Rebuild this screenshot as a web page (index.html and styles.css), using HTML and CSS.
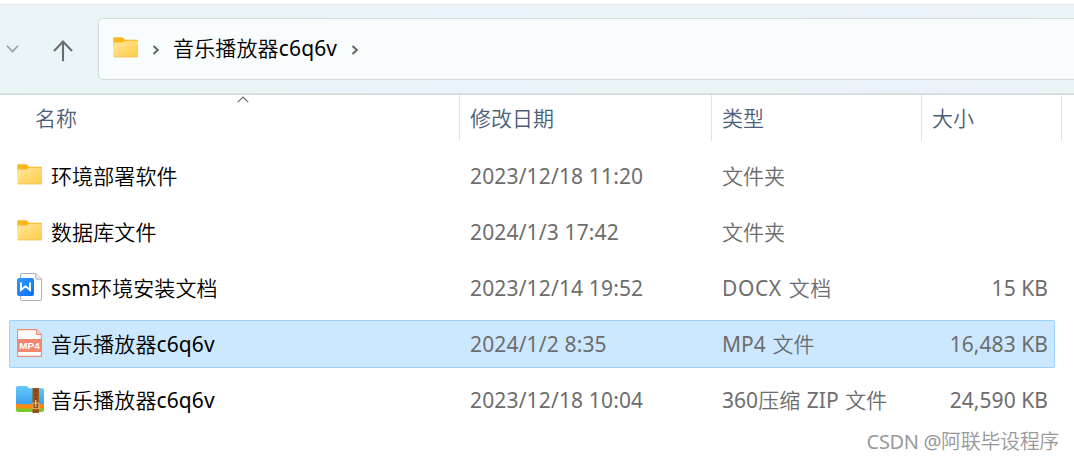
FILE: index.html
```
<!DOCTYPE html>
<html lang="zh-CN">
<head>
    <meta charset="UTF-8">
    <meta name="viewport" content="width=device-width, initial-scale=1.0">
    <title>音乐播放器c6q6v</title>
    <link rel="stylesheet" href="styles.css">
</head>
<body>
    <!-- Shared folder icon -->
    <svg class="defs" width="0" height="0">
        <defs>
            <linearGradient id="folderFill" x1="0" y1="0" x2="1" y2="1">
                <stop offset="0" stop-color="#ffe8a0"/>
                <stop offset="1" stop-color="#fdcb42"/>
            </linearGradient>
            <symbol id="folder" viewBox="0 0 26 22">
                <path d="M0.3 1.5Q0.3 0.3 1.5 0.3H9Q9.8 0.3 10.4 1L12 2.8H24Q25 2.8 25 4V10H0.3Z" fill="#f9b61e"/>
                <path d="M0.3 5.5H9.3Q10.3 5.5 11 4.8L11.6 4.2Q12 3.8 12.8 3.8H25V19Q25 20.3 23.8 20.3H1.5Q0.3 20.3 0.3 19Z" fill="url(#folderFill)"/>
                <path d="M1 19.8H24.5" stroke="#f1c45c" stroke-width="0.9"/>
            </symbol>
        </defs>
    </svg>

    <div class="explorer">
        <div class="toolbar">
            <svg class="recent" width="14" height="10" viewBox="0 0 14 10">
                <path d="M1 1.8L6.5 7.5L12 1.8" fill="none" stroke="#999d9e" stroke-width="1.6"/>
            </svg>
            <svg class="up" width="22" height="24" viewBox="0 0 22 24">
                <path d="M11 22.3V3M2 12L11 2.5L20 12" fill="none" stroke="#6b6e6e" stroke-width="2.1"/>
            </svg>
            <div class="address">
                <svg class="address-icon" width="26" height="22"><use href="#folder"/></svg>
                <svg class="chevron" width="8" height="12" viewBox="0 0 8 12">
                    <path d="M1.5 2L5.8 6L1.5 10" fill="none" stroke="#666" stroke-width="2"/>
                </svg>
                <span class="crumb">音乐播放器c6q6v</span>
                <svg class="chevron" width="8" height="12" viewBox="0 0 8 12">
                    <path d="M1.5 2L5.8 6L1.5 10" fill="none" stroke="#666" stroke-width="2"/>
                </svg>
            </div>
        </div>

        <div class="columns">
            <div class="column column-name">
                名称
                <svg class="sort" width="12" height="7" viewBox="0 0 12 7">
                    <path d="M0.8 6.2L6 1L11.2 6.2" fill="none" stroke="#666" stroke-width="1.1"/>
                </svg>
            </div>
            <div class="column">修改日期</div>
            <div class="column">类型</div>
            <div class="column">大小</div>
        </div>

        <div class="files">
            <div class="file">
                <svg class="icon icon-folder" width="26" height="22"><use href="#folder"/></svg>
                <div class="name">环境部署软件</div>
                <div class="date">2023/12/18 11:20</div>
                <div class="type">文件夹</div>
                <div class="size"></div>
            </div>
            <div class="file">
                <svg class="icon icon-folder" width="26" height="22"><use href="#folder"/></svg>
                <div class="name">数据库文件</div>
                <div class="date">2024/1/3 17:42</div>
                <div class="type">文件夹</div>
                <div class="size"></div>
            </div>
            <div class="file">
                <svg class="icon icon-doc" width="28" height="28" viewBox="0 0 28 28">
                    <defs>
                        <linearGradient id="docFill" x1="0" y1="0" x2="1" y2="1">
                            <stop offset="0" stop-color="#2f9bff"/>
                            <stop offset="1" stop-color="#0d6ff2"/>
                        </linearGradient>
                    </defs>
                    <path d="M6 0.5H20L25.5 6V26Q25.5 27.5 24 27.5H6Q4.5 27.5 4.5 26V2Q4.5 0.5 6 0.5Z" fill="#fff" stroke="#a9aeb9"/>
                    <path d="M19.8 0.8V5Q19.8 6.2 21 6.2H25.3" fill="#eef0f3" stroke="#a9aeb9"/>
                    <rect x="1" y="5" width="17" height="18" rx="2" fill="url(#docFill)"/>
                    <path d="M5 9.5V17L9.5 13.2L14 17V9.5" fill="none" stroke="#fff" stroke-width="1.9"/>
                </svg>
                <div class="name">ssm环境安装文档</div>
                <div class="date">2023/12/14 19:52</div>
                <div class="type type-docx">DOCX 文档</div>
                <div class="size">15 KB</div>
            </div>
            <div class="file selected">
                <svg class="icon icon-doc" width="28" height="28" viewBox="0 0 28 28">
                    <path d="M2 0.6H20.5L25.4 5.5V27.4H1.6V1Z" fill="#fff" stroke="#ef8b75" stroke-width="1.1"/>
                    <path d="M20.5 0.6V5.5H25.4" fill="#f9cfc5" stroke="#ef8b75"/>
                    <rect x="1" y="10" width="25" height="13" fill="#f2866e"/>
                    <text x="13.5" y="20.2" class="icon-label" textLength="20.5" lengthAdjust="spacingAndGlyphs">MP4</text>
                </svg>
                <div class="name">音乐播放器c6q6v</div>
                <div class="date">2024/1/2 8:35</div>
                <div class="type">MP4 文件</div>
                <div class="size">16,483 KB</div>
            </div>
            <div class="file">
                <svg class="icon icon-doc" width="28" height="28" viewBox="0 0 28 28">
                    <defs>
                        <linearGradient id="zipFill" x1="0" y1="0" x2="0" y2="1">
                            <stop offset="0" stop-color="#66c9fa"/>
                            <stop offset="1" stop-color="#3aa2ee"/>
                        </linearGradient>
                    </defs>
                    <rect x="0" y="18" width="28" height="9" rx="2" fill="#7cc72c"/>
                    <rect x="0" y="15" width="28" height="8.5" rx="2" fill="#ff8a0c"/>
                    <path d="M0 3Q0 1 2 1H10Q11.3 1 12 2L12.8 3.2H26Q28 3.2 28 5.2V17.5Q28 19.3 26 19.3H2Q0 19.3 0 17.5Z" fill="url(#zipFill)"/>
                    <rect x="16.5" y="3" width="6.5" height="25" fill="#96521c"/>
                    <path d="M19.7 5V15" stroke="#5d2f10" stroke-width="1.4" stroke-dasharray="1.5 2.5"/>
                    <rect x="16.8" y="18" width="6" height="5.6" fill="none" stroke="#e8b45c" stroke-width="1"/>
                    <path d="M19.7 15V22" stroke="#f2cc72" stroke-width="1.2"/>
                </svg>
                <div class="name">音乐播放器c6q6v</div>
                <div class="date">2023/12/18 10:04</div>
                <div class="type">360压缩 ZIP 文件</div>
                <div class="size">24,590 KB</div>
            </div>
        </div>

        <div class="watermark">CSDN @阿联毕设程序</div>
    </div>
</body>
</html>
```
FILE: styles.css
```
* {
    margin: 0;
    padding: 0;
    box-sizing: border-box;
}

body {
    font-family: 'Noto Sans', 'Noto Sans CJK SC DemiLight', 'Noto Sans CJK SC Light', 'Noto Sans CJK SC', sans-serif;
    font-size: 21px;
    line-height: 28px;
    background: #fff;
    color: #000;
    overflow: hidden;
}

svg {
    display: block;
    flex-shrink: 0;
}

.defs {
    position: absolute;
}

.explorer {
    position: relative;
    height: 460px;
    padding-top: 4px;
    overflow: hidden;
}

/* Address bar */
.toolbar {
    display: flex;
    align-items: center;
    height: 91px;
    padding: 0 0 1px 6px;
    background: linear-gradient(90deg, #e9f5f7 0%, #ebf4f8 35%, #ebf4fb 45%, #ebf4f7 55%, #ebf4f7 72%, #ebf3fa 83%, #ebf4f7 100%);
    border-top: 1px solid #e5e7e7;
    border-bottom: 2px solid #d6dee0;
}

.recent {
    margin-top: 1px;
}

.up {
    margin-left: 32px;
    margin-top: 5px;
}

.address {
    display: flex;
    align-items: center;
    flex: 1;
    height: 62px;
    margin-left: 24px;
    margin-right: -8px;
    padding-left: 14px;
    background: #f9fcfd;
    border: 1px solid #d3d8da;
    border-radius: 5px;
}

.address-icon {
    margin-right: 13px;
    margin-top: -2px;
}

.crumb {
    margin: -2px 14px 0 13px;
    letter-spacing: 0.15px;
}

.chevron {
    margin-top: 3px;
}

/* Column headers */
.columns {
    display: grid;
    grid-template-columns: 460px 252px 210px 140px;
    height: 46px;
    color: #4c607a;
}

.column {
    padding: 9px 0 0 10px;
    border-right: 1px solid #e2e2e2;
}

.column-name {
    position: relative;
    padding-left: 35px;
}

.sort {
    position: absolute;
    top: 1px;
    left: 237px;
}

/* File list */
.files {
    display: flex;
    flex-direction: column;
    gap: 8px;
    margin: 11px 19px 0 9px;
}

.file {
    display: grid;
    grid-template-columns: 35px 419px 252px 210px 1fr;
    align-items: center;
    height: 48px;
    padding: 0 6px;
    border: 1px solid transparent;
    border-radius: 2px;
    color: #6d6d6d;
}

.file.selected {
    background: #cce8ff;
    border-color: #99d1ff;
}

.icon-folder {
    margin: -2px 0 0 1px;
}

.icon-doc {
    margin-top: -2px;
}

.icon-label {
    font-family: 'Liberation Sans', sans-serif;
    font-size: 9.5px;
    font-weight: bold;
    fill: #fff;
    text-anchor: middle;
}

.name {
    color: #000;
    letter-spacing: 0.1px;
}

.date {
    letter-spacing: 0.15px;
}

.type {
    letter-spacing: 0.05px;
    word-spacing: 1px;
}

.type-docx {
    letter-spacing: 0.6px;
}

.size {
    letter-spacing: 0.05px;
    text-align: right;
    white-space: nowrap;
}

.watermark {
    position: absolute;
    right: 15px;
    bottom: 4px;
    font-size: 20px;
    letter-spacing: -0.35px;
    color: #999;
}
```
